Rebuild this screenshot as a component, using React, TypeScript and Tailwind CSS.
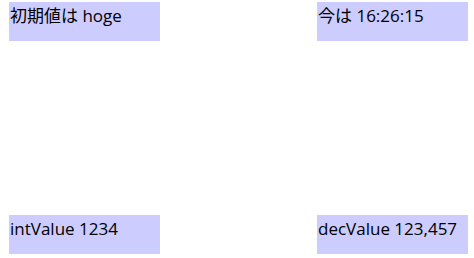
export default function App() {
  const boxClass =
    "w-[151px] h-[39px] bg-[#ccccff] pl-[1px] text-[17px] leading-[27px] text-black";

  return (
    <main
      className="flex h-[258px] w-[474px] flex-col justify-between bg-white pb-[4px] pl-[9px] pr-[6px] pt-[2px]"
      style={{ fontFamily: '"Open Sans", "Noto Sans CJK JP", sans-serif' }}
    >
      <div className="flex justify-between">
        <div className={boxClass}>初期値は hoge</div>
        <div className={boxClass}>今は 16:26:15</div>
      </div>
      <div className="flex justify-between">
        <div className={boxClass}>intValue 1234</div>
        <div className={boxClass}>decValue 123,457</div>
      </div>
    </main>
  );
}
